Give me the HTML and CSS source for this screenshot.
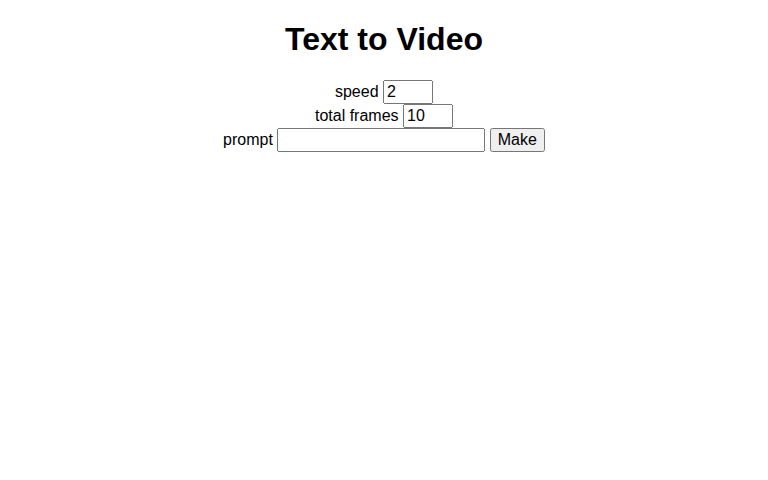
FILE: index.html
```html
<!DOCTYPE html>
<html>
<head>
<meta charset="utf-8">
<title>Text to Video</title>
<link rel="stylesheet" href="styles.css">
</head>
<body>
<h1 class="title">Text to Video</h1>
<div class="controls">
  <div class="row"><label>speed <input class="num" type="text" value="2"></label></div>
  <div class="row"><label>total frames <input class="num" type="text" value="10"></label></div>
  <div class="row"><label>prompt <input class="prompt" type="text"></label> <button class="make">Make</button></div>
</div>
</body>
</html>
```

FILE: styles.css
```css
body {
  margin: 0 8px;
  font-family: "Liberation Sans", Arial, sans-serif;
  font-size: 16px;
  text-align: center;
  color: #000;
  background: #fff;
}

.title {
  font-size: 32px;
  font-weight: bold;
  margin: 21px 0 22px;
}

.row {
  line-height: 24px;
}

input {
  font-family: "Liberation Sans", Arial, sans-serif;
  font-size: 16px;
}

.num {
  width: 42px;
}

.prompt {
  width: 200px;
}

.make {
  font-family: "Liberation Sans", Arial, sans-serif;
  font-size: 16px;
}
```
